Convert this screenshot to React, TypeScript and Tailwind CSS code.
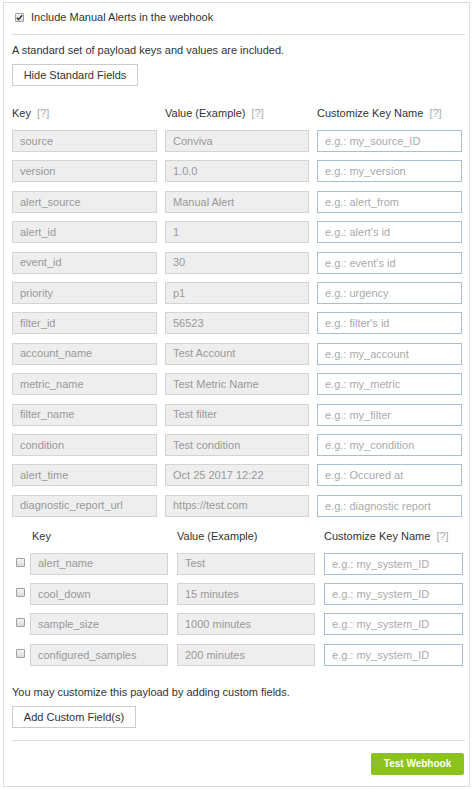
import React from 'react'

const standardRows = [
  { key: 'source', value: 'Conviva', placeholder: 'e.g.: my_source_ID' },
  { key: 'version', value: '1.0.0', placeholder: 'e.g.: my_version' },
  { key: 'alert_source', value: 'Manual Alert', placeholder: 'e.g.: alert_from' },
  { key: 'alert_id', value: '1', placeholder: "e.g.: alert's id" },
  { key: 'event_id', value: '30', placeholder: "e.g.: event's id" },
  { key: 'priority', value: 'p1', placeholder: 'e.g.: urgency' },
  { key: 'filter_id', value: '56523', placeholder: "e.g.: filter's id" },
  { key: 'account_name', value: 'Test Account', placeholder: 'e.g.: my_account' },
  { key: 'metric_name', value: 'Test Metric Name', placeholder: 'e.g.: my_metric' },
  { key: 'filter_name', value: 'Test filter', placeholder: 'e.g.: my_filter' },
  { key: 'condition', value: 'Test condition', placeholder: 'e.g.: my_condition' },
  { key: 'alert_time', value: 'Oct 25 2017 12:22', placeholder: 'e.g.: Occured at' },
  { key: 'diagnostic_report_url', value: 'https://test.com', placeholder: 'e.g.: diagnostic report' }
]

const optionalRows = [
  { key: 'alert_name', value: 'Test' },
  { key: 'cool_down', value: '15 minutes' },
  { key: 'sample_size', value: '1000 minutes' },
  { key: 'configured_samples', value: '200 minutes' }
]

function ReadOnlyField({ text }: { text: string }) {
  return (
    <div className="h-[22px] bg-[#eeeeee] border border-[#d4d4d4] px-[7px] flex items-center text-[11px] text-[#999999] whitespace-nowrap overflow-hidden">
      {text}
    </div>
  )
}

function KeyNameField({ placeholder }: { placeholder: string }) {
  return (
    <input
      type="text"
      placeholder={placeholder}
      className="h-[22px] w-full bg-white border border-[#a9bcd0] px-[7px] text-[11px] text-[#333] placeholder:text-[#aaaaaa] outline-none"
    />
  )
}

function Box({ checked }: { checked?: boolean }) {
  return (
    <span className="w-[9px] h-[9px] shrink-0 border border-[#a0a0a0] rounded-[1px] bg-gradient-to-b from-[#f4f4f4] to-[#dcdcdc] flex items-center justify-center">
      {checked && (
        <svg viewBox="0 0 8 8" className="w-[7px] h-[7px]">
          <path d="M1 4.2 L3 6.2 L7 1.5" fill="none" stroke="#333" strokeWidth="1.6" />
        </svg>
      )}
    </span>
  )
}

export default function App() {
  return (
    <div className="min-h-[789px] bg-white pt-[2px] pl-[3px] font-['Liberation_Sans',Arial,sans-serif] text-[#333333]">
      <div className="w-[467px] h-[785px] border border-[#dddddd] pl-[8px] pr-[4px]">
        {/* Manual alerts toggle */}
        <div className="h-[28px] flex items-center gap-[7px] pl-[3px] text-[11px]">
          <Box checked />
          <span>Include Manual Alerts in the webhook</span>
        </div>
        <div className="mt-[3px] border-t border-[#dddddd]" />

        <p className="mt-[7px] text-[11px] leading-[16px]">
          A standard set of payload keys and values are included.
        </p>
        <button className="mt-[6px] h-[22px] w-[126px] bg-white border border-[#cccccc] text-[11px] text-[#333]">
          Hide Standard Fields
        </button>

        {/* Standard fields */}
        <div className="mt-[19px] grid grid-cols-[145px_144px_145px] gap-x-[8px] text-[11px] leading-[16px]">
          <div>Key <span className="text-[#aaaaaa] ml-[3px]">[?]</span></div>
          <div>Value (Example) <span className="text-[#aaaaaa] ml-[3px]">[?]</span></div>
          <div>Customize Key Name <span className="text-[#aaaaaa] ml-[3px]">[?]</span></div>
        </div>
        <div className="mt-[9px] grid grid-cols-[145px_144px_145px] gap-x-[8px] gap-y-[8.4px]">
          {standardRows.map((row) => (
            <React.Fragment key={row.key}>
              <ReadOnlyField text={row.key} />
              <ReadOnlyField text={row.value} />
              <KeyNameField placeholder={row.placeholder} />
            </React.Fragment>
          ))}
        </div>

        {/* Optional fields */}
        <div className="mt-[11px] pl-[18px] grid grid-cols-[138px_138px_139px] gap-x-[9px] text-[11px] leading-[16px]">
          <div className="pl-[2px]">Key</div>
          <div>Value (Example)</div>
          <div>Customize Key Name <span className="text-[#aaaaaa] ml-[3px]">[?]</span></div>
        </div>
        <div className="mt-[9px] flex flex-col gap-[8.4px]">
          {optionalRows.map((row) => (
            <div key={row.key} className="flex items-center">
              <span className="ml-[4px] mr-[5px] -mt-[3px] flex">
                <Box />
              </span>
              <div className="grid grid-cols-[138px_138px_139px] gap-x-[9px]">
                <ReadOnlyField text={row.key} />
                <ReadOnlyField text={row.value} />
                <KeyNameField placeholder="e.g.: my_system_ID" />
              </div>
            </div>
          ))}
        </div>

        {/* Custom fields */}
        <p className="mt-[18px] text-[11px] leading-[16px]">
          You may customize this payload by adding custom fields.
        </p>
        <button className="mt-[6px] h-[22px] w-[124px] bg-white border border-[#cccccc] text-[11px] text-[#333]">
          Add Custom Field(s)
        </button>
        <div className="mt-[12px] border-t border-[#dddddd]" />

        <div className="mt-[12px] flex justify-end pr-[1px]">
          <button className="h-[22px] w-[93px] bg-[#8cc21e] rounded-[2px] text-white text-[10px] font-bold">
            Test Webhook
          </button>
        </div>
      </div>
    </div>
  )
}
